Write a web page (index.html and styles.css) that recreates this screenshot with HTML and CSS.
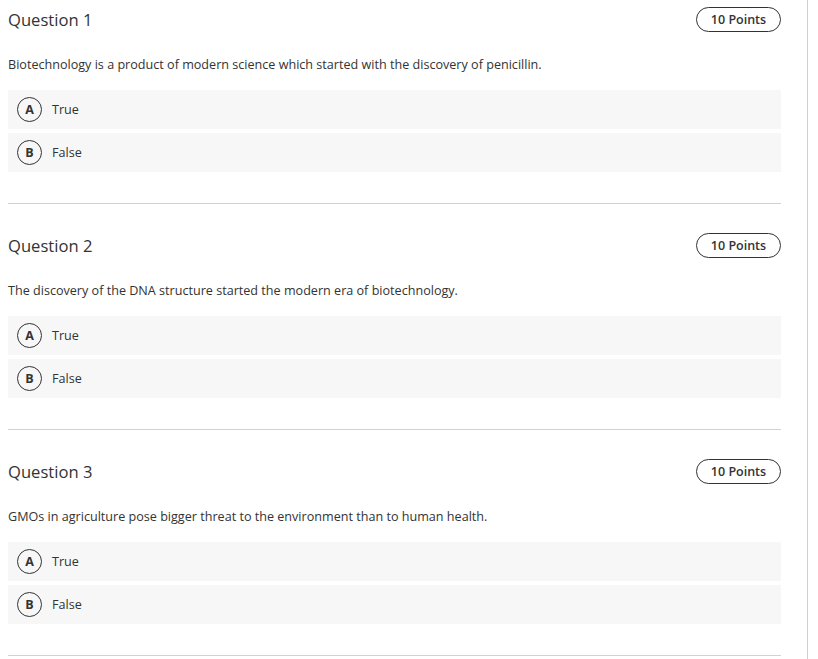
FILE: index.html
```html
<!DOCTYPE html>
<html>
<head>
<meta charset="utf-8">
<link rel="stylesheet" href="styles.css">
</head>
<body>
<div class="page">
  <div class="content">
    <section class="question">
      <div class="q-head">
        <h2 class="q-title">Question 1</h2>
        <span class="points">10 Points</span>
      </div>
      <p class="q-text">Biotechnology is a product of modern science which started with the discovery of penicillin.</p>
      <div class="options">
        <div class="option"><span class="letter">A</span><span class="label">True</span></div>
        <div class="option"><span class="letter">B</span><span class="label">False</span></div>
      </div>
    </section>
    <section class="question">
      <div class="q-head">
        <h2 class="q-title">Question 2</h2>
        <span class="points">10 Points</span>
      </div>
      <p class="q-text">The discovery of the DNA structure started the modern era of biotechnology.</p>
      <div class="options">
        <div class="option"><span class="letter">A</span><span class="label">True</span></div>
        <div class="option"><span class="letter">B</span><span class="label">False</span></div>
      </div>
    </section>
    <section class="question">
      <div class="q-head">
        <h2 class="q-title">Question 3</h2>
        <span class="points">10 Points</span>
      </div>
      <p class="q-text">GMOs in agriculture pose bigger threat to the environment than to human health.</p>
      <div class="options">
        <div class="option"><span class="letter">A</span><span class="label">True</span></div>
        <div class="option"><span class="letter">B</span><span class="label">False</span></div>
      </div>
    </section>
  </div>
</div>
</body>
</html>
```
FILE: styles.css
```css
html, body {
  margin: 0;
  padding: 0;
  background: #fff;
}
body {
  font-family: "Open Sans", "Liberation Sans", sans-serif;
  color: #333;
  overflow: hidden;
  height: 659px;
}
.page {
  width: 808px;
  height: 659px;
  border-right: 1px solid #cfcfcf;
  box-sizing: border-box;
  padding: 7px 27px 0 8px;
  overflow: hidden;
}
.content {
  width: 773px;
}
.question {
  border-bottom: 1px solid #d2d2d2;
  margin-bottom: 29px;
}
.q-head {
  display: flex;
  justify-content: space-between;
  align-items: center;
  height: 25px;
}
.q-title {
  margin: 0;
  font-size: 16.6px;
  font-weight: 400;
  color: #333;
}
.points {
  box-sizing: border-box;
  width: 85px;
  height: 25px;
  border: 1px solid #333;
  border-radius: 13px;
  font-size: 12.5px;
  font-weight: 600;
  display: flex;
  align-items: center;
  justify-content: center;
  color: #333;
}
.q-text {
  margin: 24px 0 0;
  font-size: 12.6px;
  line-height: 18px;
  color: #333;
}
.options {
  margin-top: 16px;
  display: flex;
  flex-direction: column;
  gap: 4px;
  padding-bottom: 31px;
}
.option {
  height: 39px;
  background: #f7f7f7;
  display: flex;
  align-items: center;
  padding-left: 9px;
}
.letter {
  box-sizing: border-box;
  width: 25px;
  height: 25px;
  border: 1px solid #333;
  border-radius: 50%;
  display: flex;
  align-items: center;
  justify-content: center;
  font-size: 12.5px;
  font-weight: 700;
  color: #333;
}
.label {
  margin-left: 10px;
  font-size: 12.6px;
  color: #333;
}
```
